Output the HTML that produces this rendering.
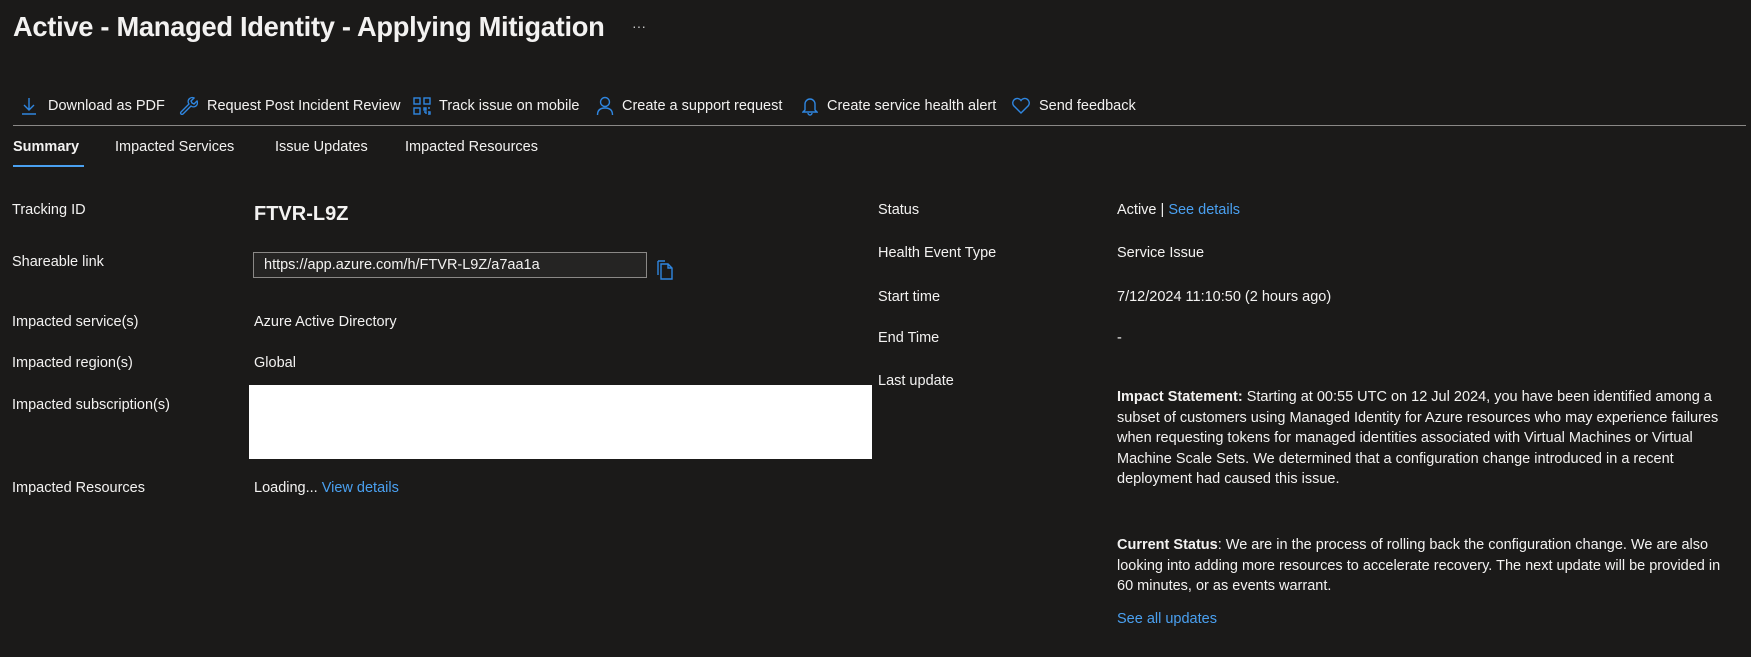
<!DOCTYPE html>
<html><head><meta charset="utf-8"><style>
*{margin:0;padding:0;box-sizing:border-box}
body{width:1751px;height:657px;background:#1b1a19;color:#f3f2f1;font-family:"Liberation Sans",sans-serif;font-size:14.5px;position:relative;overflow:hidden}
.a{position:absolute;white-space:nowrap}
.lk{color:#4aa0f0}
svg{position:absolute}
.ic{stroke:#2f86e0;fill:none;stroke-width:1.4}
</style></head><body>
<div class="a" style="left:13px;top:11px;font-size:27.3px;font-weight:bold;letter-spacing:-0.3px">Active - Managed Identity - Applying Mitigation</div>
<div class="a" style="left:632px;top:18px;font-size:14px;color:#ccc">···</div>

<!-- toolbar -->
<svg width="18" height="20" style="left:20px;top:96px" class="ic"><path d="M9 2v12M4 9l5 5 5-5M2 18h14"/></svg>
<div class="a" style="left:48px;top:98px">Download as PDF</div>
<svg width="20" height="20" style="left:178px;top:95px" class="ic"><path d="M3 17l8-8a4 4 0 0 1 5-6l-3 3 1 2 2 1 3-3a4 4 0 0 1-6 5l-8 8a1.4 1.4 0 0 1-2-2z"/></svg>
<div class="a" style="left:207px;top:98px">Request Post Incident Review</div>
<svg width="18" height="18" style="left:413px;top:97px" class="ic"><rect x="1" y="1" width="6" height="6"/><rect x="11" y="1" width="6" height="6"/><rect x="1" y="11" width="6" height="6"/><path d="M11 11h2v2h-2zM15 11h2M11 15h2v2M15 15h2v2h-2"/></svg>
<div class="a" style="left:439px;top:98px">Track issue on mobile</div>
<svg width="18" height="20" style="left:596px;top:96px" class="ic"><circle cx="9" cy="6" r="4.5"/><path d="M1.5 19c0-5 3-7 7.5-7s7.5 2 7.5 7"/></svg>
<div class="a" style="left:622px;top:98px">Create a support request</div>
<svg width="16" height="20" style="left:802px;top:96px" class="ic"><path d="M3 14V8a5 5 0 0 1 10 0v6l2 2H1zM6 17a2 2 0 0 0 4 0"/></svg>
<div class="a" style="left:827px;top:98px">Create service health alert</div>
<svg width="20" height="18" style="left:1011px;top:97px" class="ic"><path d="M10 16L2.5 8.5a4.2 4.2 0 0 1 7.5-5 4.2 4.2 0 0 1 7.5 5z"/></svg>
<div class="a" style="left:1039px;top:98px">Send feedback</div>
<div class="a" style="left:13px;top:125px;width:1733px;height:1px;background:#8a8886"></div>

<!-- tabs -->
<div class="a" style="left:13px;top:139px;font-weight:bold">Summary</div>
<div class="a" style="left:13px;top:165px;width:71px;height:2px;background:#4aa0f0"></div>
<div class="a" style="left:115px;top:139px">Impacted Services</div>
<div class="a" style="left:275px;top:139px">Issue Updates</div>
<div class="a" style="left:405px;top:139px">Impacted Resources</div>

<!-- left -->
<div class="a" style="left:12px;top:202px">Tracking ID</div>
<div class="a" style="left:254px;top:203px;font-size:20px;font-weight:bold">FTVR-L9Z</div>
<div class="a" style="left:12px;top:254px">Shareable link</div>
<div class="a" style="left:253px;top:252px;width:394px;height:26px;border:1px solid #8a8886;background:#252423;padding:4px 0 0 10px">https://app.azure.com/h/FTVR-L9Z/a7aa1a</div>
<svg width="18" height="20" style="left:656px;top:260px" class="ic"><path d="M5 4h7l4 4v11H5z M12 4v4h4 M2 1h7M2 1v14"/></svg>
<div class="a" style="left:12px;top:314px">Impacted service(s)</div>
<div class="a" style="left:254px;top:314px">Azure Active Directory</div>
<div class="a" style="left:12px;top:355px">Impacted region(s)</div>
<div class="a" style="left:254px;top:355px">Global</div>
<div class="a" style="left:12px;top:397px">Impacted subscription(s)</div>
<div class="a" style="left:249px;top:385px;width:623px;height:74px;background:#fff"></div>
<div class="a" style="left:12px;top:480px">Impacted Resources</div>
<div class="a" style="left:254px;top:480px">Loading... <span class="lk">View details</span></div>

<!-- right -->
<div class="a" style="left:878px;top:202px">Status</div>
<div class="a" style="left:1117px;top:202px">Active | <span class="lk">See details</span></div>
<div class="a" style="left:878px;top:245px">Health Event Type</div>
<div class="a" style="left:1117px;top:245px">Service Issue</div>
<div class="a" style="left:878px;top:289px">Start time</div>
<div class="a" style="left:1117px;top:289px">7/12/2024 11:10:50 (2 hours ago)</div>
<div class="a" style="left:878px;top:330px">End Time</div>
<div class="a" style="left:1117px;top:330px">-</div>
<div class="a" style="left:878px;top:373px">Last update</div>
<div class="a" style="left:1117px;top:387px;line-height:20.5px"><b>Impact Statement:</b> Starting at 00:55 UTC on 12 Jul 2024, you have been identified among a<br>subset of customers using Managed Identity for Azure resources who may experience failures<br>when requesting tokens for managed identities associated with Virtual Machines or Virtual<br>Machine Scale Sets. We determined that a configuration change introduced in a recent<br>deployment had caused this issue.</div>
<div class="a" style="left:1117px;top:535px;line-height:20.5px"><b>Current Status</b>: We are in the process of rolling back the configuration change. We are also<br>looking into adding more resources to accelerate recovery. The next update will be provided in<br>60 minutes, or as events warrant.</div>
<div class="a lk" style="left:1117px;top:611px">See all updates</div>
</body></html>
